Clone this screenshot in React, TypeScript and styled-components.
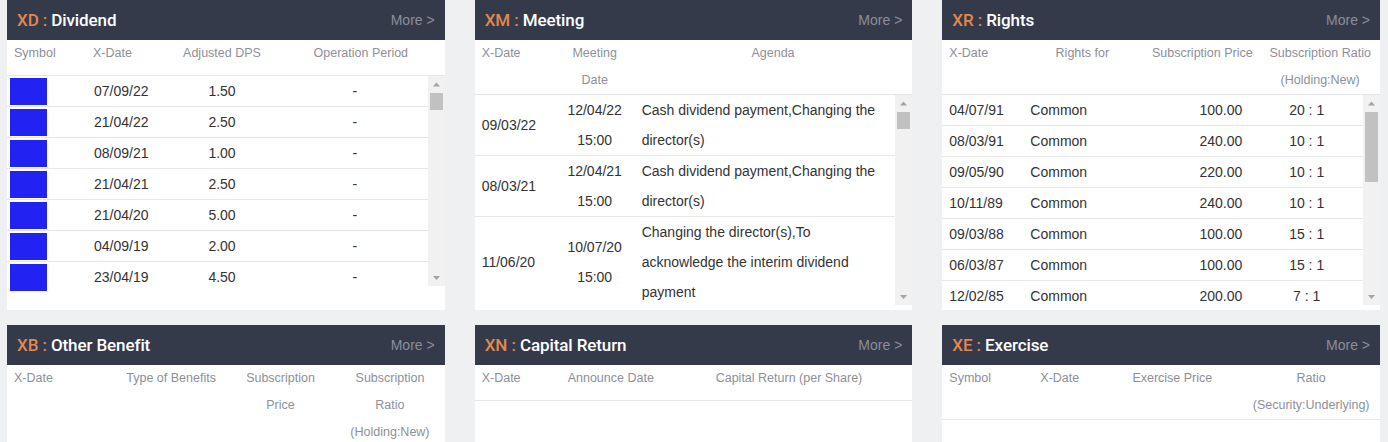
import React from 'react';
import styled, { createGlobalStyle } from 'styled-components';

type Align = 'left' | 'center' | 'right';

interface Column {
  label: string;
  align: Align;
}

interface BodySpec {
  cols: string;
  aligns: Align[];
  pads?: number[];
  rows: React.ReactNode[][];
  height?: number;
  thumbTop: number;
  thumbSize: number;
}

interface PanelProps {
  code: string;
  title: string;
  headCols: string;
  head: Column[];
  headMin?: number;
  body?: BodySpec;
  height: number;
}

const GlobalStyle = createGlobalStyle`
  html, body {
    margin: 0;
    padding: 0;
    background: #eff0f2;
    overflow: hidden;
  }
  body {
    font-family: "Liberation Sans", Arial, sans-serif;
  }
`;

const Page = styled.div`
  display: grid;
  grid-template-columns: repeat(3, 1fr);
  grid-template-rows: 310px 200px;
  column-gap: 30px;
  row-gap: 15px;
  padding: 0 8px 0 7px;
`;

const Card = styled.section<{ $height: number }>`
  height: ${(p) => p.$height}px;
  background: #fff;
  display: flex;
  flex-direction: column;
  overflow: hidden;
`;

const CardHeader = styled.header`
  flex: 0 0 40px;
  background: #353a4a;
  display: flex;
  align-items: center;
  justify-content: space-between;
  padding: 0 10px;
`;

const Title = styled.h2`
  margin: 0;
  font-family: Roboto, "Liberation Sans", sans-serif;
  font-weight: 500;
  font-size: 17px;
  color: #fff;
  letter-spacing: -0.1px;
`;

const Code = styled.span`
  color: #e2884e;
`;

const More = styled.a`
  font-size: 14px;
  color: #8a8e9b;
  text-decoration: none;
  cursor: pointer;
`;

const HeadRow = styled.div<{ $cols: string; $min: number }>`
  display: grid;
  grid-template-columns: ${(p) => p.$cols};
  align-items: start;
  min-height: ${(p) => p.$min}px;
  border-bottom: 1px solid #e6e7e9;
`;

const HeadCell = styled.div<{ $align: Align }>`
  font-size: 12.5px;
  line-height: 27px;
  color: #8d9098;
  white-space: pre-line;
  text-align: ${(p) => p.$align};
  padding: 0 7px;
`;

const Body = styled.div<{ $height: number }>`
  flex: 0 0 ${(p) => p.$height}px;
  display: flex;
  align-items: flex-start;
  overflow: hidden;
`;

const Rows = styled.div`
  flex: 1;
  align-self: stretch;
  overflow: hidden;
`;

const Row = styled.div<{ $cols: string }>`
  display: grid;
  grid-template-columns: ${(p) => p.$cols};
  align-items: center;
  min-height: 30px;
  border-bottom: 1px solid #e6e7e9;

  &:last-child {
    border-bottom: none;
  }
`;

const Cell = styled.div<{ $align: Align; $pad: number }>`
  font-size: 14px;
  line-height: 30px;
  color: #333;
  white-space: pre-line;
  text-align: ${(p) => p.$align};
  padding: 0 ${(p) => p.$pad}px;
  display: flex;
  justify-content: ${(p) => (p.$align === 'left' ? 'flex-start' : p.$align === 'right' ? 'flex-end' : 'center')};
`;

const Swatch = styled.div`
  width: 37px;
  height: 27px;
  background: #2222f2;
  margin-left: -4px;
`;

const ScrollBar = styled.div`
  flex: 0 0 17px;
  height: 210px;
  background: #f1f1f1;
  display: flex;
  flex-direction: column;
`;

const Arrow = styled.div`
  flex: 0 0 17px;
  display: flex;
  align-items: center;
  justify-content: center;
`;

const Track = styled.div`
  flex: 1;
  padding: 0 2px;
`;

const Thumb = styled.div<{ $top: number; $size: number }>`
  margin-top: ${(p) => p.$top}px;
  height: ${(p) => p.$size}px;
  background: #c1c1c1;
`;

function ArrowIcon({ down }: { down?: boolean }) {
  return (
    <svg width="17" height="17" viewBox="0 0 17 17">
      <polygon
        points={down ? '5,7 12,7 8.5,11' : '5,10.5 12,10.5 8.5,6.5'}
        fill="#a3a3a3"
      />
    </svg>
  );
}

function Scroll({ top, size }: { top: number; size: number }) {
  return (
    <ScrollBar>
      <Arrow><ArrowIcon /></Arrow>
      <Track>
        <Thumb $top={top} $size={size} />
      </Track>
      <Arrow><ArrowIcon down /></Arrow>
    </ScrollBar>
  );
}

function Panel({ code, title, headCols, head, headMin = 35, body, height }: PanelProps) {
  return (
    <Card $height={height}>
      <CardHeader>
        <Title>
          <Code>{code} : </Code>
          {title}
        </Title>
        <More>More &gt;</More>
      </CardHeader>
      <HeadRow $cols={headCols} $min={headMin}>
        {head.map((c) => (
          <HeadCell key={c.label} $align={c.align}>{c.label}</HeadCell>
        ))}
      </HeadRow>
      {body && (
        <Body $height={body.height ?? 210}>
          <Rows>
            {body.rows.map((r, i) => (
              <Row key={i} $cols={body.cols}>
                {r.map((v, j) => (
                  <Cell key={j} $align={body.aligns[j]} $pad={body.pads ? body.pads[j] : 7}>
                    {v}
                  </Cell>
                ))}
              </Row>
            ))}
          </Rows>
          <Scroll top={body.thumbTop} size={body.thumbSize} />
        </Body>
      )}
    </Card>
  );
}

const dividends = [
  ['07/09/22', '1.50'],
  ['21/04/22', '2.50'],
  ['08/09/21', '1.00'],
  ['21/04/21', '2.50'],
  ['21/04/20', '5.00'],
  ['04/09/19', '2.00'],
  ['23/04/19', '4.50'],
];

const agendaA = 'Cash dividend payment,Changing the director(s)';

const meetings = [
  ['09/03/22', '12/04/22\n15:00', agendaA],
  ['08/03/21', '12/04/21\n15:00', agendaA],
  ['11/06/20', '10/07/20\n15:00', 'Changing the director(s),To acknowledge the interim dividend payment'],
];

const rights = [
  ['04/07/91', '100.00', '20 : 1'],
  ['08/03/91', '240.00', '10 : 1'],
  ['09/05/90', '220.00', '10 : 1'],
  ['10/11/89', '240.00', '10 : 1'],
  ['09/03/88', '100.00', '15 : 1'],
  ['06/03/87', '100.00', '15 : 1'],
  ['12/02/85', '200.00', '7 : 1'],
];

export default function App() {
  return (
    <>
      <GlobalStyle />
      <Page>
        <Panel
          code="XD"
          title="Dividend"
          height={310}
          headCols="79px 81px 110px 1fr"
          head={[
            { label: 'Symbol', align: 'left' },
            { label: 'X-Date', align: 'left' },
            { label: 'Adjusted DPS', align: 'center' },
            { label: 'Operation Period', align: 'center' },
          ]}
          body={{
            cols: '80px 75px 120px 1fr',
            aligns: ['left', 'left', 'center', 'center'],
            pads: [7, 7, 7, 7],
            rows: dividends.map(([d, v]) => [<Swatch />, d, v, '-']),
            height: 217,
            thumbTop: 0,
            thumbSize: 17,
          }}
        />
        <Panel
          code="XM"
          title="Meeting"
          height={310}
          headCols="81px 78px 1fr"
          headMin={54}
          head={[
            { label: 'X-Date', align: 'left' },
            { label: 'Meeting\nDate', align: 'center' },
            { label: 'Agenda', align: 'center' },
          ]}
          body={{
            cols: '81px 78px 1fr',
            aligns: ['left', 'center', 'left'],
            pads: [7, 4, 8],
            rows: meetings,
            thumbTop: 0,
            thumbSize: 17,
          }}
        />
        <Panel
          code="XR"
          title="Rights"
          height={310}
          headCols="78px 124px 116px 1fr"
          headMin={54}
          head={[
            { label: 'X-Date', align: 'left' },
            { label: 'Rights for', align: 'center' },
            { label: 'Subscription Price', align: 'center' },
            { label: 'Subscription Ratio\n(Holding:New)', align: 'center' },
          ]}
          body={{
            cols: '80px 128px 100px 1fr',
            aligns: ['left', 'left', 'right', 'center'],
            pads: [7, 8, 8, 7],
            rows: rights.map(([d, p, r]) => [d, 'Common', p, r]),
            thumbTop: 0,
            thumbSize: 70,
          }}
        />
        <Panel
          code="XB"
          title="Other Benefit"
          height={200}
          headCols="repeat(4, 1fr)"
          head={[
            { label: 'X-Date', align: 'left' },
            { label: 'Type of Benefits', align: 'center' },
            { label: 'Subscription\nPrice', align: 'center' },
            { label: 'Subscription\nRatio\n(Holding:New)', align: 'center' },
          ]}
        />
        <Panel
          code="XN"
          title="Capital Return"
          height={200}
          headCols="86px 105px 1fr"
          head={[
            { label: 'X-Date', align: 'left' },
            { label: 'Announce Date', align: 'left' },
            { label: 'Capital Return (per Share)', align: 'center' },
          ]}
        />
        <Panel
          code="XE"
          title="Exercise"
          height={200}
          headCols="91px 69px 140px 1fr"
          head={[
            { label: 'Symbol', align: 'left' },
            { label: 'X-Date', align: 'left' },
            { label: 'Exercise Price', align: 'center' },
            { label: 'Ratio\n(Security:Underlying)', align: 'center' },
          ]}
        />
      </Page>
    </>
  );
}
